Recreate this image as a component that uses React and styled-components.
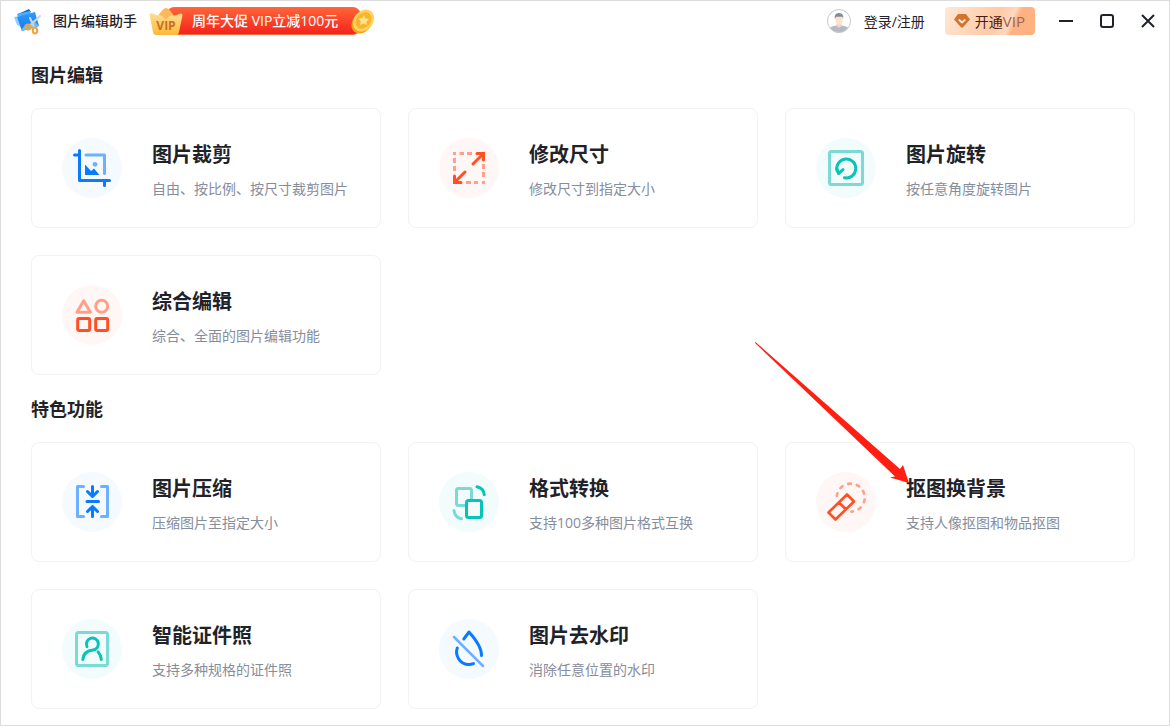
import React from 'react';
import styled, { createGlobalStyle } from 'styled-components';

const GlobalStyle = createGlobalStyle`
  * {
    box-sizing: border-box;
  }
  body {
    margin: 0;
    background-color: white;
    color: #1f2329;
    font-family: "Open Sans", "Noto Sans CJK SC", sans-serif;
    font-size: 14px;
  }
`
const Window = styled.div`
  min-height: 100vh;
  border: 1px solid #dcdcdc;
`
const TitleBar = styled.header`
  display: flex;
  align-items: center;
  justify-content: space-between;
  height: 40px;
  padding: 0 13px 0 12px;
`
const BarGroup = styled.div`
  display: flex;
  align-items: center;
`
const AppName = styled.span`
  margin-left: 10px;
  margin-right: 12px;
  line-height: 20px;
  font-weight: 500;
`
const Promo = styled.a`
  display: flex;
  align-items: center;
  height: 30px;
  color: white;
  text-decoration: none;
`
const PromoText = styled.span`
  height: 28px;
  margin-left: -17px;
  margin-right: -11px;
  padding: 0 22px 0 25px;
  border: 1px solid #ff6a3c;
  border-radius: 8px;
  background: linear-gradient(#ff6337, #f5231c);
  line-height: 26px;
  font-weight: 500;
  white-space: nowrap;
`
const PromoArt = styled.svg`
  position: relative;
  flex: none;
`
const PlainButton = styled.button`
  display: flex;
  align-items: center;
  padding: 0;
  border: none;
  background: none;
  color: inherit;
  font: inherit;
  cursor: pointer;
`
const Login = styled(PlainButton)`
  gap: 13px;
  margin-right: 20px;
`
const VipButton = styled(PlainButton)`
  gap: 5px;
  height: 28px;
  margin-right: 23px;
  padding: 0 10px 0 9px;
  border-radius: 4px;
  background: linear-gradient(115deg, #ffe8d6 0%, #ffc9a4 55%, #ffd9c0 70%, #ffb181 76%, #ffb181 100%);
  color: #4a1a10;
`
const VipText = styled.span`
  color: #9c6457;
  font-size: 15px;
`
const WindowButtons = styled.div`
  display: flex;
  gap: 25px;
`
const Content = styled.main`
  padding: 0 34px 16px 30px;
`
const SectionTitle = styled.h2`
  margin: 0;
  padding-top: 2px;
  font-size: 18px;
  font-weight: 700;
  line-height: 65px;
`
const CardGrid = styled.div`
  display: grid;
  grid-template-columns: repeat(3, 1fr);
  gap: 27px;
`
const Card = styled.a`
  position: relative;
  display: flex;
  align-items: center;
  gap: 30px;
  height: 120px;
  padding: 0 30px;
  border: 1px solid #f0f2f5;
  border-radius: 8px;
  color: inherit;
  text-decoration: none;
`
const CardIcon = styled.svg`
  flex: none;
  width: 60px;
  height: 60px;
  border-radius: 50%;
  background-color: ${props => props.$bg};
  fill: none;
  stroke-width: 3;
  stroke-linecap: round;
  stroke-linejoin: round;
`
const CardText = styled.div`
  padding-top: 4px;
`
const CardTitle = styled.h3`
  margin: 0 0 10px;
  font-size: 20px;
  font-weight: 700;
  line-height: 28px;
`
const CardInfo = styled.p`
  margin: 0;
  color: #868d9b;
  line-height: 20px;
`
//drawn over the cards, points at the title of its own card
const Pointer = styled.svg`
  position: absolute;
  left: -32px;
  top: -102px;
  pointer-events: none;
`

const blue = { bg: '#f5faff', dark: '#0a7aff', light: '#6cb0ff' };
const red = { bg: '#fff7f5', dark: '#ff4f23', light: '#ffa08a' };
const teal = { bg: '#f3fcfd', dark: '#08c4b8', light: '#7bdad4' };

const icons = {
  crop: c => (
    <>
      <path stroke={c.light} d="M24 17H42.5V35.5" />
      <path stroke={c.dark} d="M12.5 17H17.5M17.5 12.5V42.5H47.5M42.5 42.5V47.5" />
      <path fill={c.dark} d="M23 26.5L29 33L32 30.5L37.5 37H23Z" />
      <circle fill={c.light} cx="33" cy="26.3" r="2.4" />
    </>
  ),
  resize: c => (
    <>
      <path stroke={c.light} strokeLinecap="butt" d="M14 15.5H17M20.5 15.5H25M28 15.5H33M15.5 14V17M15.5 20V25M15.5 28V33M44.5 26V31M44.5 34V39M44.5 43V46M27 44.5H32M35 44.5H39M43 44.5H46" />
      <path stroke={c.dark} strokeLinejoin="miter" d="M34 26L43.5 16.5M38 15.5H44.5V22M26 34L16.5 43.5M15.5 38V44.5H22" />
    </>
  ),
  rotate: c => (
    <>
      <rect stroke={c.light} x="13.5" y="13.5" width="33" height="33" rx="2" />
      <path stroke={c.dark} d="M28.5 39.8A9.5 9.5 0 1 0 21 32.5" />
      <path stroke={c.dark} d="M20.7 30.5L22.5 35.5L27 31.7" />
    </>
  ),
  shapes: c => (
    <>
      <path stroke={c.light} d="M21.7 15.8L28.4 27.3H15Z" />
      <circle stroke={c.light} cx="39.7" cy="21.3" r="6" />
      <rect stroke={c.dark} x="15.7" y="33.5" width="12" height="12" rx="1.5" />
      <rect stroke={c.dark} x="33.7" y="33.5" width="12" height="12" rx="1.5" />
    </>
  ),
  compress: c => (
    <>
      <path stroke={c.light} d="M21.5 14.5H15.5V44.5H21.5M39.5 14.5H45.5V44.5H39.5" />
      <path stroke={c.dark} d="M25 29.5H36.5M30.5 14.5V24.5M25.5 19.5L30.5 24.5L35.5 19.5M30.5 44.5V34.5M25.5 39.5L30.5 34.5L35.5 39.5" />
    </>
  ),
  convert: c => (
    <>
      <rect stroke={c.light} x="17.5" y="16.5" width="15" height="17" rx="2" />
      <path stroke={c.light} d="M15 38.5C15.5 43 18.5 46 22.5 46.8" />
      <rect stroke={c.dark} fill={c.bg} x="27.5" y="28.5" width="15" height="17" rx="2" />
      <path stroke={c.dark} d="M38 14.8C42.5 15.8 45 18.5 45.2 22.8" />
    </>
  ),
  cutout: c => (
    <>
      <path stroke={c.light} strokeWidth="2.6" strokeDasharray="2.8 6" d="M20.8 24A14 14 0 1 1 35.5 39.6" />
      <path stroke={c.dark} strokeWidth="2.6" d="M31 22.5L38 29.5L19.5 47.5L12.5 40.5ZM23 30.5L29.5 37" />
    </>
  ),
  idPhoto: c => (
    <>
      <rect stroke={c.light} x="14.5" y="13.5" width="31" height="33" rx="2" />
      <path stroke={c.dark} d="M25 27.7A6 6 0 1 1 31 31C25 31.5 21.5 34.5 20.8 40.5M36 32.8C38 35 39 37.5 39.3 40.5" />
    </>
  ),
  watermark: c => (
    <>
      <path stroke={c.dark} d="M24.8 20L30 13C34.5 18 42.8 28 42.5 36.5M18.3 29C16 35.5 20 45.5 30 45.5C31.8 45.5 33 45.2 34.5 44.6" />
      <path stroke={c.light} strokeWidth="2.5" d="M15 18L44 47" />
    </>
  )
};

const sections = [
  {
    title: '图片编辑',
    cards: [
      { title: '图片裁剪', info: '自由、按比例、按尺寸裁剪图片', icon: 'crop', color: blue },
      { title: '修改尺寸', info: '修改尺寸到指定大小', icon: 'resize', color: red },
      { title: '图片旋转', info: '按任意角度旋转图片', icon: 'rotate', color: teal },
      { title: '综合编辑', info: '综合、全面的图片编辑功能', icon: 'shapes', color: red }
    ]
  },
  {
    title: '特色功能',
    cards: [
      { title: '图片压缩', info: '压缩图片至指定大小', icon: 'compress', color: blue },
      { title: '格式转换', info: '支持100多种图片格式互换', icon: 'convert', color: teal },
      { title: '抠图换背景', info: '支持人像抠图和物品抠图', icon: 'cutout', color: red, pointer: true },
      { title: '智能证件照', info: '支持多种规格的证件照', icon: 'idPhoto', color: teal },
      { title: '图片去水印', info: '消除任意位置的水印', icon: 'watermark', color: blue }
    ]
  }
];

const Logo = () => (
  <svg width="30" height="28" viewBox="0 0 30 28">
    <defs>
      <linearGradient id="logoBlue" x1="0" y1="0" x2="0" y2="1">
        <stop offset="0" stopColor="#2f9bff" />
        <stop offset="1" stopColor="#1279ea" />
      </linearGradient>
    </defs>
    <path fill="#1468cf" d="M5 7L16 2L18 5L7 9Z" />
    <path fill="#48b2ff" d="M4 7L17 4L20 17L8 21Z" />
    <path fill="#8fd0ff" d="M1 10L6 9L8 20L4 18Z" />
    <path fill="url(#logoBlue)" d="M4 10L22 5L26 19L9 24Z" />
    <path fill="#66bdff" d="M8 23L13 17L16 19L20 13L26 19L9 24Z" />
    <path fill="none" stroke="#c9d6e3" strokeWidth="2" strokeLinecap="round" d="M27 9L17 18.5M17 11L21 20" />
    <circle fill="none" stroke="#f7a035" strokeWidth="2" cx="15" cy="20" r="2.5" />
    <ellipse fill="none" stroke="#f7a035" strokeWidth="2" cx="22" cy="23.5" rx="2.2" ry="3" />
  </svg>
);

const CrownIcon = () => (
  <PromoArt width="34" height="30" viewBox="0 0 34 30">
    <defs>
      <linearGradient id="crownGold" x1="0" y1="0" x2="0" y2="1">
        <stop offset="0" stopColor="#ffdf92" />
        <stop offset="1" stopColor="#ffb83c" />
      </linearGradient>
    </defs>
    <path fill="#ffb75c" d="M9 10Q14 2 17 2Q20 2 25 10L24 16H10Z" />
    <path fill="url(#crownGold)" d="M0.500 8.500Q1 6 4 7.500Q7 9.500 10 9Q13 8.500 15 12Q17 14.500 19 12Q21 8.500 24 9.500Q27 10 30 8Q33.500 6.500 33.500 9.500L30 26Q29.500 29 27 29H7Q4.500 29 4 26Z" />
    <text x="17" y="24" textAnchor="middle" fill="#c4701c" fontSize="12" fontWeight="700">VIP</text>
  </PromoArt>
);

const Coin = () => (
  <PromoArt width="26" height="28" viewBox="0 0 26 28">
    <ellipse fill="#f5a11c" cx="12" cy="15.500" rx="9.500" ry="12" transform="rotate(40 12 15.500)" />
    <ellipse fill="#ffd35c" cx="13.500" cy="13.500" rx="9.500" ry="12" transform="rotate(40 13.500 13.500)" />
    <ellipse fill="#f9b42d" cx="13.500" cy="13.500" rx="7" ry="9" transform="rotate(40 13.500 13.500)" />
    <path fill="#ffe28c" d="M14 8L15.500 11.500L19 12L16.500 14.500L17 18L13.500 16.500L10 18L10.700 14.300L8.500 11.500L12 11.200Z" />
  </PromoArt>
);

const Avatar = () => (
  <svg width="24" height="24" viewBox="0 0 24 24">
    <defs>
      <clipPath id="avatarClip"><circle cx="12" cy="12" r="11.5" /></clipPath>
    </defs>
    <g clipPath="url(#avatarClip)">
      <path fill="#b3bac4" d="M1 24V21Q2 18 9 16.500H15Q22 18 23 21V24Z" />
      <path fill="#f9d3bd" d="M9.500 13H14.500V17L12 19L9.500 17Z" />
      <path fill="#ffe1cf" d="M8.300 7.500H15.700V11Q15 15.500 12 15.500Q9 15.500 8.300 11Z" />
      <path fill="#7e8b99" d="M7.800 10Q7 4 12 4Q17 4 16.200 10L15.300 7.800H9.200Z" />
    </g>
    <circle fill="none" stroke="#c4c8ce" cx="12" cy="12" r="11.5" />
  </svg>
);

function App() {
  return (
    <>
      <GlobalStyle />
      <Window>
        <TitleBar>
          <BarGroup>
            <Logo />
            <AppName>图片编辑助手</AppName>
            <Promo href="#">
              <CrownIcon />
              <PromoText>周年大促 VIP立减100元</PromoText>
              <Coin />
            </Promo>
          </BarGroup>
          <BarGroup>
            <Login>
              <Avatar />
              登录/注册
            </Login>
            <VipButton>
              <svg width="16" height="14" viewBox="0 0 16 14">
                <path fill="#d2742f" d="M4 0H12L16 5.500L9 13.300Q8 14.200 7 13.300L0 5.500Z" />
                <path fill="none" stroke="#ffe9d9" strokeWidth="1.800" strokeLinecap="round" strokeLinejoin="round" d="M5.300 6L8 8.600L10.700 6" />
              </svg>
              <span>开通<VipText>VIP</VipText></span>
            </VipButton>
            <WindowButtons>
              <PlainButton aria-label="最小化">
                <svg width="16" height="16" fill="none" stroke="#1f2329" strokeWidth="2"><path d="M1 8H15" /></svg>
              </PlainButton>
              <PlainButton aria-label="最大化">
                <svg width="16" height="16" fill="none" stroke="#1f2329" strokeWidth="2"><rect x="2" y="2" width="12" height="12" rx="2" /></svg>
              </PlainButton>
              <PlainButton aria-label="关闭">
                <svg width="16" height="16" fill="none" stroke="#1f2329" strokeWidth="2"><path d="M2 2L14 14M14 2L2 14" /></svg>
              </PlainButton>
            </WindowButtons>
          </BarGroup>
        </TitleBar>
        <Content>
          {sections.map(section => (
            <section key={section.title}>
              <SectionTitle>{section.title}</SectionTitle>
              <CardGrid>
                {section.cards.map(card => (
                  <Card key={card.title} href="#">
                    <CardIcon viewBox="0 0 60 60" $bg={card.color.bg}>{icons[card.icon](card.color)}</CardIcon>
                    <CardText>
                      <CardTitle>{card.title}</CardTitle>
                      <CardInfo>{card.info}</CardInfo>
                    </CardText>
                    {card.pointer ?
                    <Pointer width="160" height="150" viewBox="0 0 160 150">
                      <path fill="#ff2014" d="M1.500 1L146 128L149 124L155 142L136 136.500L141 135.500L1 2Z" />
                    </Pointer>
                    : null}
                  </Card>
                ))}
              </CardGrid>
            </section>
          ))}
        </Content>
      </Window>
    </>
  );
}

export default App;
